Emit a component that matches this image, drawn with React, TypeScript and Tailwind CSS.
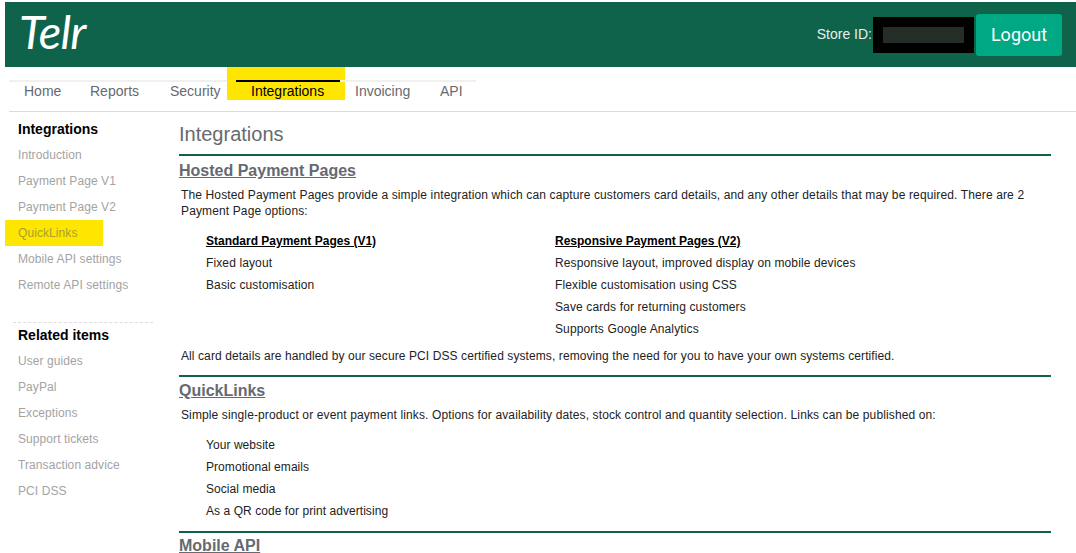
import React from "react";

const sideMain = ["Introduction", "Payment Page V1", "Payment Page V2", "QuickLinks", "Mobile API settings", "Remote API settings"];
const sideRelated = ["User guides", "PayPal", "Exceptions", "Support tickets", "Transaction advice", "PCI DSS"];
const navItems = ["Home", "Reports", "Security", "Integrations", "Invoicing", "API"];

const navClasses: Record<string, string> = {
  Home: "w-[66px] pl-[15px] text-[#666a70]",
  Reports: "w-[80px] pl-[15px] text-[#666a70]",
  Security: "w-[72px] pl-[15px] text-[#666a70]",
  Integrations: "w-[118px] pl-[24px] text-black",
  Invoicing: "w-[85px] pl-[10px] text-[#666a70]",
  API: "w-[46px] pl-[10px] text-[#666a70]",
};

const Rule: React.FC = () => <div className="h-[2px] bg-[#10634b]" />;

const SectionTitle: React.FC<{ children: React.ReactNode }> = ({ children }) => (
  <h2 className="text-[16px] leading-[20px] font-bold underline text-[#666a70]">{children}</h2>
);

const Row: React.FC<{ children: React.ReactNode; bold?: boolean }> = ({ children, bold }) => (
  <div className={`h-[22px] leading-[22px] ${bold ? "font-bold underline text-black tracking-normal" : ""}`}>{children}</div>
);

const Side: React.FC<{ title: string; items: string[] }> = ({ title, items }) => (
  <div>
    <h3 className="pl-[13px] h-[26px] leading-[26px] text-[14px] font-bold text-black">{title}</h3>
    {items.map((item) => (
      <div
        key={item}
        className={`pl-[13px] h-[26px] leading-[26px] text-[12px] tracking-[0.08px] ${item === "QuickLinks" ? "bg-[#ffe600] text-[#a8a030] w-[98px]" : "text-[#a3a3a3]"}`}
      >
        {item}
      </div>
    ))}
  </div>
);

export default function App() {
  return (
    <div className="w-[1076px] h-[553px] overflow-hidden bg-white pt-[2px] font-['Liberation_Sans',Arial,sans-serif]">
      {/* header */}
      <header className="ml-[5px] h-[65px] bg-[#10634b] flex items-center justify-between pl-[14px] pr-[14px]">
        <div className="font-['Lato',sans-serif] italic text-[47px] leading-none text-white -mt-[6px] tracking-[-0.8px]">Telr</div>
        <div className="flex items-center">
          <span className="text-[14px] text-[#e6f0ec] mr-[1px]">Store ID:</span>
          <div className="w-[101px] h-[36px] bg-black flex items-center justify-center">
            <div className="w-[81px] h-[16px] bg-[#242e27]" />
          </div>
          <button className="ml-[2px] w-[86px] h-[42px] bg-[#00a884] rounded-[3px] text-white text-[18px] font-['Roboto',sans-serif]">
            Logout
          </button>
        </div>
      </header>

      {/* nav */}
      <div className="ml-[9px] h-[45px] border-b border-[#dcdcdc]">
        <nav className="w-[467px] flex h-[33px]">
          {navItems.map((item) => (
            <div
              key={item}
              className={`text-[14px] ${navClasses[item]} ${item === "Integrations" ? "bg-[#ffe600]" : ""}`}
            >
              <div
                className={`mt-[13px] h-[20px] leading-[18px] border-t-2 -ml-[15px] pl-[15px] ${item === "Integrations" ? "border-black w-[104px]" : "border-[#f0f0f0]"}`}
              >
                {item}
              </div>
            </div>
          ))}
        </nav>
      </div>

      <div className="flex">
        {/* sidebar */}
        <aside className="ml-[5px] w-[174px] shrink-0 pt-[4px]">
          <Side title="Integrations" items={sideMain} />
          <div className="ml-[8px] w-[140px] mt-[24px] -mb-[1px] border-t border-dashed border-[#dddddd]" />
          <Side title="Related items" items={sideRelated} />
        </aside>

        {/* content */}
        <main className="w-[872px] text-[12px] leading-[16px] tracking-[0.12px] text-[#222222]">
          <h1 className="mt-[8px] h-[34px] leading-[28px] text-[20px] tracking-normal text-[#666a70]">Integrations</h1>
          <Rule />
          <div className="mt-[5px] tracking-normal"><SectionTitle>Hosted Payment Pages</SectionTitle></div>
          <p className="mt-[6px] ml-[2px] tracking-[0.13px]">
            The Hosted Payment Pages provide a simple integration which can capture customers card details, and any other details that may be required. There are 2 Payment Page options:
          </p>
          <div className="mt-[11px] ml-[27px] flex">
            <div className="w-[349px]">
              <Row bold>Standard Payment Pages (V1)</Row>
              <Row>Fixed layout</Row>
              <Row>Basic customisation</Row>
            </div>
            <div>
              <Row bold>Responsive Payment Pages (V2)</Row>
              <Row>Responsive layout, improved display on mobile devices</Row>
              <Row>Flexible customisation using CSS</Row>
              <Row>Save cards for returning customers</Row>
              <Row>Supports Google Analytics</Row>
            </div>
          </div>
          <p className="mt-[8px] ml-[2px] tracking-[0.09px]">All card details are handled by our secure PCI DSS certified systems, removing the need for you to have your own systems certified.</p>
          <div className="mt-[11px]"><Rule /></div>
          <div className="mt-[4px] tracking-normal"><SectionTitle>QuickLinks</SectionTitle></div>
          <p className="mt-[6px] ml-[2px]">Simple single-product or event payment links. Options for availability dates, stock control and quantity selection. Links can be published on:</p>
          <div className="mt-[11px] ml-[27px] tracking-[0.06px]">
            <Row>Your website</Row>
            <Row>Promotional emails</Row>
            <Row>Social media</Row>
            <Row>As a QR code for print advertising</Row>
          </div>
          <div className="mt-[9px]"><Rule /></div>
          <div className="mt-[3px] tracking-normal"><SectionTitle>Mobile API</SectionTitle></div>
        </main>
      </div>
    </div>
  );
}
